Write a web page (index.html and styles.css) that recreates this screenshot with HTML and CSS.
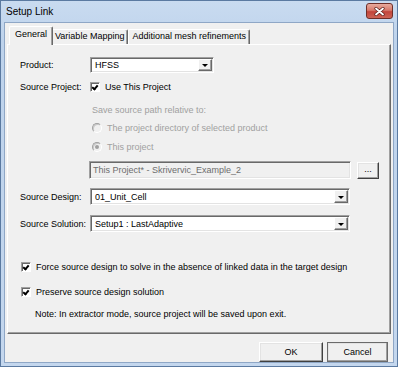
FILE: index.html
```html
<!DOCTYPE html>
<html lang="en">
<head>
    <meta charset="UTF-8">
    <title>Setup Link</title>
    <link rel="stylesheet" href="styles.css">
</head>
<body>
    <div class="window">
        <div class="titlebar">
            <span class="title">Setup Link</span>
            <div class="close-btn">
                <svg width="11" height="9" viewBox="0 0 11 9">
                    <path d="M2 1.5 L9 7.5 M9 1.5 L2 7.5" stroke="#5a1f1a" stroke-width="3.2" stroke-linecap="round"/>
                    <path d="M2 1.5 L9 7.5 M9 1.5 L2 7.5" stroke="#fff" stroke-width="1.8" stroke-linecap="round"/>
                </svg>
            </div>
        </div>

        <div class="client">
            <div class="tabs">
                <div class="tab active">General</div>
                <div class="tab">Variable Mapping</div>
                <div class="tab">Additional mesh refinements</div>
            </div>

            <div class="panel">
                <div class="row row-product">
                    <span class="field-label">Product:</span>
                    <div class="select select-short">
                        <span class="select-value">HFSS</span>
                        <span class="select-arrow"></span>
                    </div>
                </div>

                <div class="row row-project">
                    <span class="field-label">Source Project:</span>
                    <div class="check-item">
                        <span class="checkbox checked"></span>
                        <span>Use This Project</span>
                    </div>
                </div>

                <div class="sub row-save disabled">Save source path relative to:</div>

                <div class="sub row-radio1 disabled">
                    <span class="radio"></span>
                    <span>The project directory of selected product</span>
                </div>

                <div class="sub row-radio2 disabled">
                    <span class="radio checked"></span>
                    <span>This project</span>
                </div>

                <div class="sub row-path">
                    <div class="textbox">This Project* - Skrivervic_Example_2</div>
                    <div class="btn btn-browse">...</div>
                </div>

                <div class="row row-design">
                    <span class="field-label">Source Design:</span>
                    <div class="select">
                        <span class="select-value">01_Unit_Cell</span>
                        <span class="select-arrow"></span>
                    </div>
                </div>

                <div class="row row-solution">
                    <span class="field-label">Source Solution:</span>
                    <div class="select">
                        <span class="select-value">Setup1 : LastAdaptive</span>
                        <span class="select-arrow"></span>
                    </div>
                </div>

                <div class="check-item row-force">
                    <span class="checkbox checked"></span>
                    <span>Force source design to solve in the absence of linked data in the target design</span>
                </div>

                <div class="check-item row-preserve">
                    <span class="checkbox checked"></span>
                    <span>Preserve source design solution</span>
                </div>

                <div class="note">Note: In extractor mode, source project will be saved upon exit.</div>
            </div>

            <div class="footer">
                <div class="btn btn-ok">OK</div>
                <div class="btn btn-cancel">Cancel</div>
            </div>
        </div>
    </div>
</body>
</html>
```

FILE: styles.css
```css
:root {
    --face: #f0f0f0;
    --shadow: #a0a0a0;
    --dark: #696969;
    --disabled: #a0a0a0;
    --frame: #c4d7ee;
}

* {
    box-sizing: border-box;
    margin: 0;
    padding: 0;
}

body {
    font-family: 'Liberation Sans', Arial, sans-serif;
    font-size: 9px;
    color: #000;
    background: var(--frame);
}

.window {
    width: 398px;
    height: 367px;
    border: 1px solid #5b7aa1;
    background: linear-gradient(#c9dbf0, #bed3ec 40px, #c4d7ee);
    display: flex;
    flex-direction: column;
}

/* title bar */
.titlebar {
    height: 21px;
    display: flex;
    align-items: center;
    justify-content: space-between;
    padding: 0 4px 0 5px;
}

.title {
    font-size: 10px;
    color: #000;
}

.close-btn {
    width: 27px;
    height: 16px;
    margin-top: -1px;
    border: 1px solid #6e2e28;
    border-radius: 3px;
    background: linear-gradient(#e8ab9e, #d7796b 45%, #c2443a 55%, #cd6355);
    display: flex;
    align-items: center;
    justify-content: center;
}

/* client area */
.client {
    flex: 1;
    margin: 0 3px 3px;
    border: 1px solid #8fa7c6;
    background: var(--face);
    display: flex;
    flex-direction: column;
}

.tabs {
    height: 21px;
    padding-left: 6px;
    display: flex;
    align-items: flex-end;
}

.tab {
    height: 15px;
    line-height: 13px;
    padding: 0 3px;
    border-top: 1px solid #fff;
    border-left: 1px solid #fff;
    border-right: 1px solid var(--dark);
    border-radius: 2px 2px 0 0;
    box-shadow: inset -1px 0 var(--shadow);
    white-space: nowrap;
}

.tab.active {
    height: 19px;
    line-height: 15px;
    margin: 0 -2px -1px;
    padding: 0 5px;
    background: var(--face);
    position: relative;
    z-index: 1;
}

.panel {
    height: 290px;
    margin: 0 2px;
    padding: 12px 0 0 12px;
    border: 1px solid;
    border-color: #fff var(--dark) var(--dark) #fff;
    box-shadow: inset -1px -1px var(--shadow);
}

/* form rows */
.row {
    display: flex;
    align-items: center;
}

.field-label {
    width: 70px;
    flex-shrink: 0;
}

.sub {
    display: flex;
    align-items: center;
    margin-left: 72px;
    height: 14px;
}

.disabled {
    color: var(--disabled);
}

.row-product { height: 16px; }
.row-project { height: 14px; margin-top: 7px; }
.row-save { margin-top: 9px; }
.row-radio1 { margin-top: 4px; }
.row-radio2 { margin-top: 5px; }
.row-path { height: 18px; margin-top: 7px; margin-left: 69px; }
.row-design { height: 17px; margin-top: 9px; }
.row-solution { height: 17px; margin-top: 10px; }
.row-force { margin-top: 28px; margin-left: 1px; }
.row-preserve { margin-top: 11px; margin-left: 1px; }

/* sunken edit boxes */
.select,
.textbox {
    display: flex;
    align-items: center;
    border: 1px solid;
    border-color: var(--shadow) #fff #fff var(--shadow);
    box-shadow: inset 1px 1px var(--dark), inset -1px -1px #e3e3e3;
}

.select {
    width: 260px;
    height: 100%;
    background: #fff;
    padding: 1px;
}

.select-short {
    width: 124px;
}

.select-value {
    flex: 1;
    padding-left: 3px;
}

.select-arrow {
    width: 14px;
    height: 100%;
    background: var(--face);
    border: 1px solid;
    border-color: #fff var(--dark) var(--dark) #fff;
    box-shadow: inset -1px -1px var(--shadow);
    display: flex;
    align-items: center;
    justify-content: center;
}

.select-arrow::after {
    content: "";
    border-left: 3px solid transparent;
    border-right: 3px solid transparent;
    border-top: 3px solid #000;
    margin-top: 1px;
}

.textbox {
    width: 262px;
    height: 18px;
    padding-left: 3px;
    color: #6d6d6d;
    background: var(--face);
}

/* buttons */
.btn {
    display: flex;
    align-items: center;
    justify-content: center;
    background: var(--face);
    border: 1px solid;
    border-color: #fff #404040 #404040 #fff;
    box-shadow: inset -1px -1px var(--shadow), inset 1px 1px #e3e3e3;
}

.btn-browse {
    width: 22px;
    height: 17px;
    margin-left: 6px;
    margin-top: 1px;
    padding-bottom: 3px;
}

.footer {
    display: flex;
    justify-content: flex-end;
    gap: 4px;
    margin-top: 8px;
    padding-right: 5px;
}

.btn-ok,
.btn-cancel {
    width: 64px;
    height: 20px;
}

.btn-cancel {
    outline: 1px solid #6b6b6b;
    outline-offset: -1px;
    border-color: #fff #404040 #404040 #fff;
    width: 61px;
}

/* checkboxes and radios */
.check-item {
    display: flex;
    align-items: center;
    gap: 5px;
    height: 14px;
}

.checkbox {
    width: 10px;
    height: 10px;
    background: #fff;
    border: 1px solid;
    border-color: var(--shadow) #fff #fff var(--shadow);
    box-shadow: inset 1px 1px var(--dark);
    position: relative;
}

.checkbox.checked::after {
    content: "";
    position: absolute;
    left: 2px;
    top: 1px;
    width: 2px;
    height: 4px;
    border-right: 2px solid #000;
    border-bottom: 2px solid #000;
    transform: rotate(40deg);
}

.sub .radio {
    width: 10px;
    height: 10px;
    margin-right: 5px;
    border-radius: 50%;
    background: var(--face);
    border: 1px solid;
    border-color: var(--shadow) #fff #fff var(--shadow);
    box-shadow: inset 1px 1px #c8c8c8;
    position: relative;
}

.radio.checked::after {
    content: "";
    position: absolute;
    left: 2px;
    top: 2px;
    width: 4px;
    height: 4px;
    border-radius: 50%;
    background: var(--disabled);
}

.note {
    margin: 8px 0 0 15px;
    height: 14px;
    line-height: 14px;
}
```
